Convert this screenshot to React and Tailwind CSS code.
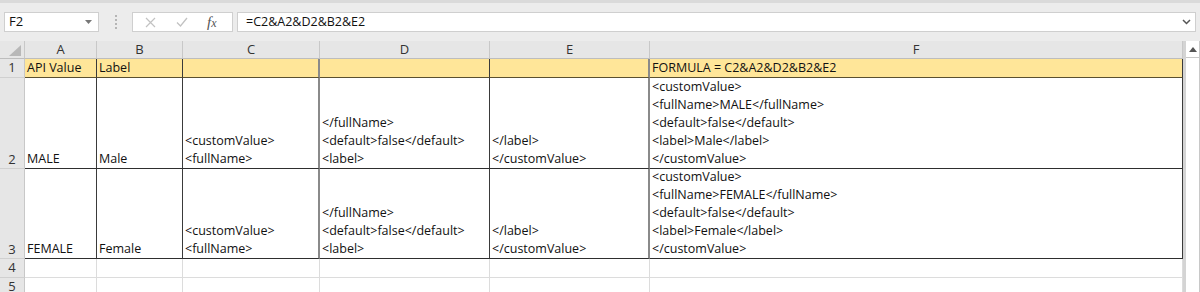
import React from 'react';

const FONT = { fontFamily: '"Open Sans", "Liberation Sans", sans-serif' };

const COLS = ['A', 'B', 'C', 'D', 'E', 'F'];

// right border style per column in the data block
const RIGHT = [
  'border-r border-r-[#3a3a3a]',
  'border-r border-r-[#3a3a3a]',
  'border-r-2 border-r-[#8a8a8a]',
  'border-r border-r-[#3a3a3a]',
  'border-r-2 border-r-[#8a8a8a]',
  'border-r border-r-[#3a3a3a]',
];

const rows = [
  {
    n: 2,
    h: 'h-[91px]',
    cells: [
      ['MALE'],
      ['Male'],
      ['<customValue>', '<fullName>'],
      ['</fullName>', '<default>false</default>', '<label>'],
      ['</label>', '</customValue>'],
      ['<customValue>', '<fullName>MALE</fullName>', '<default>false</default>', '<label>Male</label>', '</customValue>'],
    ],
  },
  {
    n: 3,
    h: 'h-[90px]',
    cells: [
      ['FEMALE'],
      ['Female'],
      ['<customValue>', '<fullName>'],
      ['</fullName>', '<default>false</default>', '<label>'],
      ['</label>', '</customValue>'],
      ['<customValue>', '<fullName>FEMALE</fullName>', '<default>false</default>', '<label>Female</label>', '</customValue>'],
    ],
  },
];

const RowHead = ({ children, className = '' }) => (
  <div className={`flex items-end justify-center bg-[#e6e6e6] border-r border-r-[#c8c8c8] text-[13px] text-[#333] ${className}`}>
    {children}
  </div>
);

const App = () => {
  return (
    <div className="w-[1200px] h-[292px] overflow-hidden bg-white text-[#111]" style={FONT}>
      {/* Formula bar */}
      <div className="h-[41px] bg-[#ececec] border-t-[3px] border-t-[#dadada] flex items-start pt-[9px] px-[4px]">
        <div className="w-[95px] h-[20px] bg-white border border-[#cfcfcf] flex items-center justify-between pl-[4px] pr-[6px] text-[13px]">
          <span>F2</span>
          <svg width="7" height="4" viewBox="0 0 7 4"><path d="M0 0h7L3.5 4z" fill="#777" /></svg>
        </div>
        <div className="w-[33px] h-[20px] flex items-center justify-center">
          <div className="flex flex-col gap-[2px]">
            <span className="w-[2px] h-[2px] bg-[#b5b5b5]" />
            <span className="w-[2px] h-[2px] bg-[#b5b5b5]" />
            <span className="w-[2px] h-[2px] bg-[#b5b5b5]" />
            <span className="w-[2px] h-[2px] bg-[#b5b5b5]" />
          </div>
        </div>
        <div className="w-[101px] h-[20px] bg-white border border-[#cfcfcf] flex items-center pl-[12px]">
          <svg width="11" height="11" viewBox="0 0 11 11" className="mr-[20px]">
            <path d="M1 1l9 9M10 1l-9 9" stroke="#c2c2c2" strokeWidth="1.2" />
          </svg>
          <svg width="12" height="10" viewBox="0 0 12 10" className="mr-[19px]">
            <path d="M1 5.5l3.5 3.5L11 1" stroke="#c2c2c2" strokeWidth="1.3" fill="none" />
          </svg>
          <span className="italic text-[15px] text-[#555] leading-none" style={{ fontFamily: '"Liberation Serif", serif' }}>
            f<span className="text-[12px]">x</span>
          </span>
        </div>
        <div className="ml-[4px] flex-1 h-[20px] bg-white border border-[#cfcfcf] flex items-center justify-between pl-[8px] pr-[4px] text-[12.5px]">
          <span>=C2&amp;A2&amp;D2&amp;B2&amp;E2</span>
          <svg width="9" height="6" viewBox="0 0 9 6"><path d="M1 1l3.5 3.5L8 1" stroke="#555" strokeWidth="1.5" fill="none" /></svg>
        </div>
      </div>

      <div className="flex">
        {/* Sheet grid */}
        <div className="w-[1183px] grid grid-cols-[25px_72px_86px_137px_170px_160px_533px]">
          {/* Column headers */}
          <div className="h-[18px] bg-[#e6e6e6] border-r border-r-[#c8c8c8] border-b border-b-[#bdbdbd] flex items-end justify-end pr-[3px] pb-[2px]">
            <svg width="12" height="11" viewBox="0 0 12 11"><path d="M12 0v11H0z" fill="#b8b8b8" /></svg>
          </div>
          {COLS.map((c) => (
            <div
              key={c}
              className="h-[18px] bg-[#e6e6e6] border-r border-r-[#c8c8c8] border-b border-b-[#bdbdbd] flex items-center justify-center text-[13px] text-[#333]"
            >
              {c}
            </div>
          ))}

          {/* Row 1 */}
          <RowHead className="h-[19px] border-b border-b-[#d0d0d0] items-center">1</RowHead>
          {['API Value', 'Label', '', '', '', 'FORMULA = C2&A2&D2&B2&E2'].map((t, i) => (
            <div
              key={i}
              className={`h-[19px] bg-[#ffe699] border-b border-b-[#5a5030] ${RIGHT[i]} flex items-center pl-[2px] text-[12.5px] whitespace-nowrap`}
            >
              {t}
            </div>
          ))}

          {/* Rows 2-3 */}
          {rows.map((r) => (
            <React.Fragment key={r.n}>
              <RowHead className={`${r.h} border-b border-b-[#d0d0d0] leading-[18px]`}>{r.n}</RowHead>
              {r.cells.map((lines, i) => (
                <div
                  key={i}
                  className={`${r.h} border-b border-b-[#2e2e2e] ${RIGHT[i]} flex flex-col justify-end pl-[2px] text-[12.5px] leading-[18px] whitespace-nowrap overflow-hidden`}
                >
                  {lines.map((l, j) => (
                    <div key={j}>{l}</div>
                  ))}
                </div>
              ))}
            </React.Fragment>
          ))}

          {/* Empty rows */}
          {[4, 5].map((n) => (
            <React.Fragment key={n}>
              <RowHead className="h-[19px] border-b border-b-[#d0d0d0] items-center">{n}</RowHead>
              {COLS.map((c) => (
                <div key={c} className="h-[19px] border-r border-r-[#dcdcdc] border-b border-b-[#dcdcdc]" />
              ))}
            </React.Fragment>
          ))}
        </div>

        {/* Vertical scrollbar */}
        <div className="flex-1 flex flex-col border-l-[3px] border-l-[#d4d4d4] bg-white border-r border-r-[#c8c8c8]">
          <div className="h-[17px] border-b border-b-[#c8c8c8] flex items-center justify-center">
            <svg width="8" height="5" viewBox="0 0 8 5"><path d="M0 5L4 0l4 5z" fill="#555" /></svg>
          </div>
        </div>
      </div>
    </div>
  );
};

export default App;
